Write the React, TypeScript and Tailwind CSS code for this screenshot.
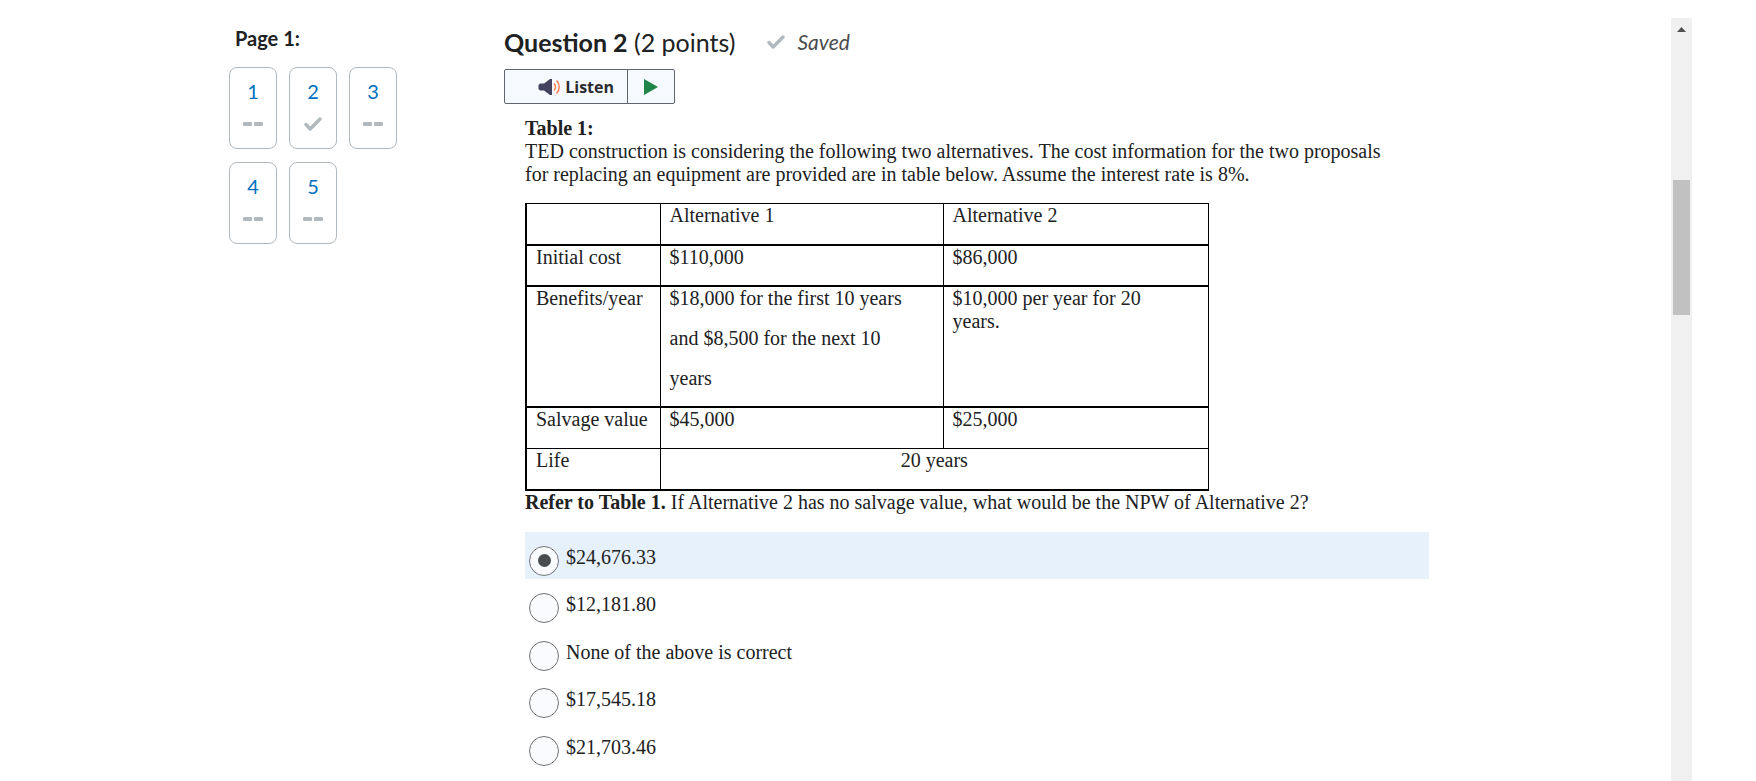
import { useState } from "react";

type PageItem = { id: number; saved: boolean };

const pages: PageItem[] = [
  { id: 1, saved: false },
  { id: 2, saved: true },
  { id: 3, saved: false },
  { id: 4, saved: false },
  { id: 5, saved: false },
];

const options = [
  "$24,676.33",
  "$12,181.80",
  "None of the above is correct",
  "$17,545.18",
  "$21,703.46",
];

function Check() {
  return (
    <svg width="18" height="14" viewBox="0 0 18 14" fill="none" aria-hidden="true">
      <path
        d="M2 7.5 6.2 12 16 2"
        stroke="#b1b9be"
        strokeWidth="3.4"
        strokeLinecap="round"
        strokeLinejoin="round"
      />
    </svg>
  );
}

function Dashes() {
  return (
    <svg width="20" height="14" viewBox="0 0 20 14" fill="#b1b9be" aria-hidden="true">
      <rect x="0" y="5" width="9" height="4" rx="1" />
      <rect x="11" y="5" width="9" height="4" rx="1" />
    </svg>
  );
}

function Speaker() {
  return (
    <svg width="23" height="18" viewBox="0 0 23 18" fill="none" aria-hidden="true">
      <path d="M2 5.5h4L12 1h2v16h-2L6 12.5H2L.5 11V7z" fill="#44415f" />
      <path d="M16 5.5c2 2 2 5 0 7M18.5 2.5c3.6 3.6 3.6 9.4 0 13" stroke="#ff7f56" strokeWidth="1.5" />
    </svg>
  );
}

export default function App() {
  const [answer, setAnswer] = useState(options[0]);

  return (
    <div className="flex min-h-screen bg-white text-[#202122]">
      <aside className="ml-[229px] w-[275px] shrink-0 pt-6 font-['Lato',sans-serif]">
        <h2 className="ml-[6px] text-[20px] leading-7 font-bold">Page 1:</h2>
        <nav className="mt-[15px] grid w-[168px] grid-cols-3 gap-x-3 gap-y-[13px]">
          {pages.map((p) => (
            <a
              key={p.id}
              href={`#q${p.id}`}
              className="flex h-[82px] flex-col items-center rounded-lg border border-[#b1b9be] pt-[9px] text-[20px] leading-7 text-[#006fbf]"
            >
              {p.id}
              <span className="mt-3">{p.saved ? <Check /> : <Dashes />}</span>
            </a>
          ))}
        </nav>
      </aside>

      <main className="min-w-0 flex-1 pt-6 pr-[242px]">
        <header className="flex items-center font-['Lato',sans-serif]">
          <h1 className="text-[25px] leading-9">
            <b>Question 2</b> (2 points)
          </h1>
          <span className="ml-8 flex items-center gap-3 text-[21px] leading-9 text-[#494c4e] italic">
            <Check />
            Saved
          </span>
        </header>

        <div className="mt-[9px] flex h-[35px] w-[171px] rounded-xs border border-[#5f6670] bg-[#f6f9fd] font-['Open_Sans',sans-serif]">
          <button
            type="button"
            className="flex flex-1 items-center justify-end gap-1 border-r border-[#5f6670] pr-[13px] text-[16px] font-bold text-[#2b2b2f]"
          >
            <Speaker />
            Listen
          </button>
          <button type="button" aria-label="Play" className="flex w-[46px] items-center justify-center">
            <svg width="14" height="16" viewBox="0 0 14 16" fill="#1f8548">
              <path d="M0 0 14 8 0 16z" />
            </svg>
          </button>
        </div>

        <section className="mt-[13px] ml-[21px] font-['Liberation_Serif',serif] text-[20px] leading-[23px]">
          <p className="pr-6">
            <b>Table 1:</b>
            <br />
            TED construction is considering the following two alternatives. The cost information for the two
            proposals for replacing an equipment are provided are in table below. Assume the interest rate is 8%.
          </p>

          <table className="mt-[17px] w-[684px] table-fixed border-collapse border border-l-2 border-black [&_td]:border [&_td]:border-black [&_td]:px-[9px] [&_td]:align-top [&_th]:border [&_th]:border-black [&_th]:px-[9px] [&_th]:text-left [&_th]:align-top [&_th]:font-normal">
            <colgroup>
              <col className="w-[134px]" />
              <col className="w-[283px]" />
              <col />
            </colgroup>
            <tbody>
              <tr className="h-[41px] border-b-2 border-black">
                <td />
                <th scope="col">Alternative 1</th>
                <th scope="col">Alternative 2</th>
              </tr>
              <tr className="h-[41px] border-b-2 border-black">
                <th scope="row">Initial cost</th>
                <td>$110,000</td>
                <td>$86,000</td>
              </tr>
              <tr className="h-[121px] border-b-2 border-black">
                <th scope="row">Benefits/year</th>
                <td>
                  <p>$18,000 for the first 10 years</p>
                  <p className="mt-[17px]">and $8,500 for the next 10</p>
                  <p className="mt-[17px]">years</p>
                </td>
                <td>
                  <p className="pr-4">$10,000 per year for 20 years.</p>
                </td>
              </tr>
              <tr className="h-[42px]">
                <th scope="row">Salvage value</th>
                <td>$45,000</td>
                <td>$25,000</td>
              </tr>
              <tr className="h-[41px] border-b-2 border-black">
                <th scope="row">Life</th>
                <td colSpan={2} className="text-center">
                  20 years
                </td>
              </tr>
            </tbody>
          </table>

          <p>
            <b>Refer to Table 1.</b> If Alternative 2 has no salvage value, what would be the NPW of Alternative 2?
          </p>

          <fieldset aria-label="Answer" className="mt-[18px] grid h-[238px] grid-rows-5">
            {options.map((o) => (
              <label key={o} className="flex items-start pt-[14px] pl-1 has-checked:bg-[#e7f1fc]">
                <input
                  type="radio"
                  name="answer"
                  checked={answer === o}
                  onChange={() => setAnswer(o)}
                  className="grid size-[30px] shrink-0 appearance-none place-items-center rounded-full border border-[#6e7376] bg-[#f9fbff] before:size-[13px] before:rounded-full checked:before:bg-[#494c4e]"
                />
                <span className="ml-[7px]">{o}</span>
              </label>
            ))}
          </fieldset>
        </section>
      </main>

      <div className="mt-[18px] mr-[64px] flex w-[21px] shrink-0 flex-col items-center bg-[#f0f0f0] pt-[9px]">
        <svg width="9" height="5" viewBox="0 0 9 5" fill="#505050" aria-hidden="true">
          <path d="M4.5 0 9 5H0z" />
        </svg>
        <div className="mt-[148px] h-[135px] w-[17px] bg-[#c1c1c1]" />
      </div>
    </div>
  );
}
